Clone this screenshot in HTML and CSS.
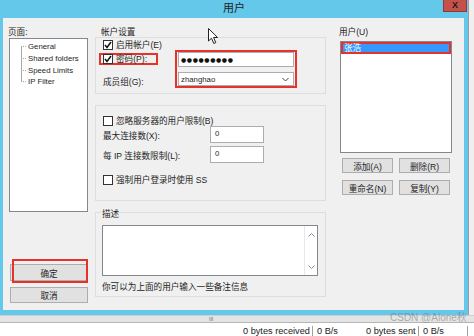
FILE: index.html
```html
<!DOCTYPE html>
<html lang="zh-CN">
<head>
  <meta charset="UTF-8">
  <title>用户</title>
  <link rel="stylesheet" href="styles.css">
</head>
<body>
<div class="screen">
  <div class="top">
    <div class="window">
      <div class="titlebar">
        <span></span>
        <span class="title">用户</span>
        <span class="close">X</span>
      </div>

      <div class="client">
        <!-- 左侧: 页面树 + 确定/取消 -->
        <div class="col-left">
          <div class="caption">页面:</div>
          <div class="tree-box">
            <ul class="tree">
              <li>General</li>
              <li>Shared folders</li>
              <li>Speed Limits</li>
              <li>IP Filter</li>
            </ul>
          </div>
          <div class="ok-wrap">
            <button class="btn btn-wide">确定</button>
            <span class="mark"></span>
          </div>
          <button class="btn btn-wide btn-cancel">取消</button>
        </div>

        <!-- 中间: 帐户设置 -->
        <div class="col-mid">
          <div class="caption">帐户设置</div>
          <div class="group group-account">
            <label class="check">
              <span class="box"><svg width="8" height="8" viewBox="0 0 8 8"><polyline points="1,4 3,6.5 7,1" fill="none" stroke="#111" stroke-width="1.5"/></svg></span>
              启用帐户(E)
            </label>
            <div class="pw-area">
              <div class="pw-labels">
                <label class="check check-marked">
                  <span class="box"><svg width="8" height="8" viewBox="0 0 8 8"><polyline points="1,4 3,6.5 7,1" fill="none" stroke="#111" stroke-width="1.5"/></svg></span>
                  密码(P):
                </label>
                <div class="row-label">成员组(G):</div>
              </div>
              <div class="redbox">
                <div class="field field-pw">●●●●●●●●●</div>
                <div class="field select">
                  <span>zhanghao</span>
                  <svg width="7" height="5" viewBox="0 0 7 5"><polyline points="0.5,1 3.5,4 6.5,1" fill="none" stroke="#444" stroke-width="1"/></svg>
                </div>
              </div>
            </div>
          </div>

          <div class="group group-limits">
            <label class="check">
              <span class="box"></span>
              忽略服务器的用户限制(B)
            </label>
            <div class="limit-row">
              <span class="limit-label">最大连接数(X):</span>
              <div class="field field-num">0</div>
            </div>
            <div class="limit-row limit-row-2">
              <span class="limit-label">每 IP 连接数限制(L):</span>
              <div class="field field-num">0</div>
            </div>
            <label class="check check-ssl">
              <span class="box"></span>
              强制用户登录时使用 SS
            </label>
          </div>

          <div class="group group-desc">
            <div class="desc-label">描述</div>
            <div class="memo">
              <div class="memo-body"></div>
              <div class="vscroll">
                <svg width="7" height="4" viewBox="0 0 7 4"><polyline points="0.5,3.5 3.5,0.5 6.5,3.5" fill="none" stroke="#8a8a8a" stroke-width="1"/></svg>
                <svg width="7" height="4" viewBox="0 0 7 4"><polyline points="0.5,0.5 3.5,3.5 6.5,0.5" fill="none" stroke="#8a8a8a" stroke-width="1"/></svg>
              </div>
            </div>
            <div class="hint">你可以为上面的用户输入一些备注信息</div>
          </div>
        </div>

        <!-- 右侧: 用户列表 -->
        <div class="col-right">
          <div class="caption">用户(U)</div>
          <div class="listbox">
            <div class="list-item selected">张浩</div>
          </div>
          <div class="btn-row">
            <button class="btn btn-small">添加(A)</button>
            <button class="btn btn-small">删除(R)</button>
          </div>
          <div class="btn-row btn-row-2">
            <button class="btn btn-small">重命名(N)</button>
            <button class="btn btn-small">复制(Y)</button>
          </div>
        </div>
      </div>
    </div>
    <div class="side"></div>
  </div>

  <div class="splitter">III</div>

  <div class="statusbar">
    <span class="cell cell-1">0 bytes received</span>
    <span class="cell cell-2">0 B/s</span>
    <span class="cell cell-3">0 bytes sent</span>
    <span class="cell cell-4">0 B/s</span>
  </div>

  <svg class="cursor" width="11" height="17" viewBox="0 0 11 17">
    <path d="M0.5,0.5 L0.5,13 L3.5,10.2 L5.8,15.5 L7.8,14.6 L5.6,9.5 L9.6,9.5 Z" fill="#fff" stroke="#222" stroke-width="1"/>
  </svg>
  <div class="watermark">CSDN @Alone秋</div>
</div>
</body>
</html>
```

FILE: styles.css
```css
* {
  box-sizing: border-box;
}

body {
  margin: 0;
  width: 474px;
  height: 336px;
  overflow: hidden;
  background: #fff;
  font-family: "Liberation Sans", "Noto Sans CJK SC", sans-serif;
  font-size: 8.6px;
  color: #1e1e1e;
}

.screen {
  position: relative;
  width: 474px;
  height: 336px;
}

.top {
  display: flex;
  height: 315px;
}

.window {
  width: 468px;
  background: #64c8ea;
  display: flex;
  flex-direction: column;
}

.side {
  flex: 1;
  background: #efefef;
  border-left: 1px solid #9c9c9c;
}

/* 标题栏 */
.titlebar {
  height: 18px;
  display: grid;
  grid-template-columns: 1fr auto 1fr;
  align-items: start;
}

.title {
  font-family: "Noto Sans CJK SC", sans-serif;
  font-size: 11px;
  line-height: 15px;
  color: #222;
}

.close {
  justify-self: end;
  width: 24px;
  height: 12px;
  margin-right: 1px;
  background: #c5514b;
  border: 1px solid #8d3833;
  border-top: 0;
  font-weight: bold;
  font-size: 9px;
  line-height: 11px;
  text-align: center;
  color: #1a1a1a;
}

.client {
  flex: 1;
  margin: 0 4px 5px 3px;
  background: #f0f0f0;
  display: flex;
}

.caption {
  height: 10px;
  line-height: 10px;
}

/* 左列 */
.col-left {
  width: 89px;
  padding: 9px 0 0 5px;
}

.tree-box {
  width: 79px;
  height: 174px;
  margin: 1px 0 0 1px;
  background: #fff;
  border: 1px solid #828790;
  padding: 2px 0 0 11px;
}

.tree {
  list-style: none;
  margin: 0;
  padding: 0;
}

.tree li {
  height: 11.7px;
  display: flex;
  align-items: center;
  font-size: 7.8px;
  background: linear-gradient(#a8a8a8, #a8a8a8) 0 0 / 1px 100% no-repeat;
}

.tree li:first-child {
  background-position: 0 100%;
  background-size: 1px 50%;
}

.tree li:last-child {
  background-size: 1px 50%;
}

.tree li::before {
  content: "";
  width: 5px;
  border-top: 1px dotted #a8a8a8;
  margin-right: 2px;
}

.btn {
  display: block;
  padding: 0;
  background: #e1e1e1;
  border: 1px solid #adadad;
  font-family: inherit;
  font-size: 8.6px;
  color: #1e1e1e;
  text-align: center;
}

.btn-wide {
  width: 78px;
  height: 17px;
  margin-left: 2px;
}

.ok-wrap {
  position: relative;
  width: 80px;
  margin-top: 52px;
}

.mark {
  position: absolute;
  left: 4px;
  right: 0;
  top: -5px;
  bottom: -2px;
  border: 2px solid #e5322b;
}

.btn-cancel {
  margin-top: 6px;
  height: 16px;
}

/* 中间列 */
.col-mid {
  width: 231px;
  margin-left: 3px;
  padding-top: 9px;
}

.col-mid > .caption {
  padding-left: 6px;
}

.group {
  border: 1px solid #dddddd;
}

.group-account {
  height: 57px;
  padding: 2px 0 0 7px;
}

.check {
  display: flex;
  align-items: center;
  gap: 3px;
  height: 10px;
  line-height: 10px;
  white-space: nowrap;
}

.box {
  width: 10px;
  height: 10px;
  border: 1px solid #333;
  background: #fff;
  display: flex;
  align-items: center;
  justify-content: center;
}

.pw-area {
  display: flex;
}

.pw-labels {
  width: 72px;
}

.check-marked {
  width: 53px;
  height: 8px;
  margin: 3px 0 0 -4px;
  padding-left: 2px;
  border: 2px solid #e5322b;
  box-sizing: content-box;
}

.row-label {
  margin-top: 12px;
  line-height: 10px;
}

.redbox {
  width: 122px;
  height: 38px;
  border: 2px solid #e5322b;
  padding: 0 1px;
}

.field {
  background: #fff;
  border: 1px solid #abadb3;
  display: flex;
  align-items: center;
  padding-left: 2px;
}

.field-pw {
  height: 15px;
  font-family: "DejaVu Sans", sans-serif;
  font-size: 6px;
  letter-spacing: 0.6px;
  color: #111;
}

.select {
  height: 14px;
  margin-top: 5px;
  justify-content: space-between;
  padding-right: 4px;
  font-size: 7.8px;
}

.group-limits {
  height: 96px;
  margin-top: 11px;
  padding: 10px 0 0 7px;
}

.limit-row {
  display: flex;
  align-items: center;
}

.limit-label {
  width: 107px;
}

.limit-row-2 {
  margin-top: 3px;
}

.field-num {
  width: 54px;
  height: 17px;
  align-items: flex-start;
  padding: 2px 0 0 4px;
  font-size: 7.8px;
}

.check-ssl {
  margin-top: 12px;
}

.group-desc {
  height: 85px;
  margin-top: 11px;
  padding: 0 7px 0 6px;
}

.desc-label {
  margin-top: -4px;
  line-height: 10px;
}

.memo {
  display: flex;
  height: 51px;
  margin-top: 6px;
  background: #fff;
  border: 1px solid #828790;
}

.memo-body {
  flex: 1;
}

.vscroll {
  width: 13px;
  border-left: 1px solid #e8e8e8;
  display: flex;
  flex-direction: column;
  justify-content: space-between;
  align-items: center;
  padding: 7px 0 6px;
}

.hint {
  margin-top: 6px;
  line-height: 10px;
}

/* 右列 */
.col-right {
  width: 125px;
  margin-left: 7px;
  padding-top: 9px;
}

.col-right > .caption {
  padding-left: 6px;
}

.listbox {
  width: 112px;
  height: 112px;
  margin: 4px 0 0 7px;
  background: #fff;
  border: 1px solid #828790;
}

.list-item {
  height: 12px;
  line-height: 8px;
  padding-left: 1px;
}

.selected {
  background: #3399ff;
  border: 2px solid #e5322b;
  color: #fff;
}

.btn-row {
  display: flex;
  gap: 6px;
  margin: 5px 0 0 9px;
}

.btn-row-2 {
  margin-top: 7px;
}

.btn-small {
  width: 51px;
  height: 15px;
}

/* 底部 */
.splitter {
  height: 8px;
  background: #e4e4e4;
  border-top: 1px solid #cfcfcf;
  border-bottom: 1px solid #b5b5b5;
  padding-left: 209px;
  font-size: 5px;
  line-height: 6px;
  color: #666;
}

.statusbar {
  display: flex;
  height: 13px;
  padding: 3px 0 0 243px;
  font-size: 9.2px;
  line-height: 10px;
  color: #222;
}

.cell {
  height: 10px;
  white-space: nowrap;
}

.cell-1 {
  width: 70px;
  border-right: 1px solid #a0a0a0;
}

.cell-2 {
  width: 53px;
  padding-left: 4px;
}

.cell-3 {
  width: 53px;
  border-right: 1px solid #a0a0a0;
}

.cell-4 {
  width: 49px;
  padding-left: 4px;
  border-right: 1px solid #a0a0a0;
}

.cursor {
  position: absolute;
  left: 208px;
  top: 28px;
}

.watermark {
  position: absolute;
  left: 390px;
  top: 309px;
  font-size: 10px;
  color: rgba(110, 110, 110, 0.5);
  white-space: nowrap;
}
```
